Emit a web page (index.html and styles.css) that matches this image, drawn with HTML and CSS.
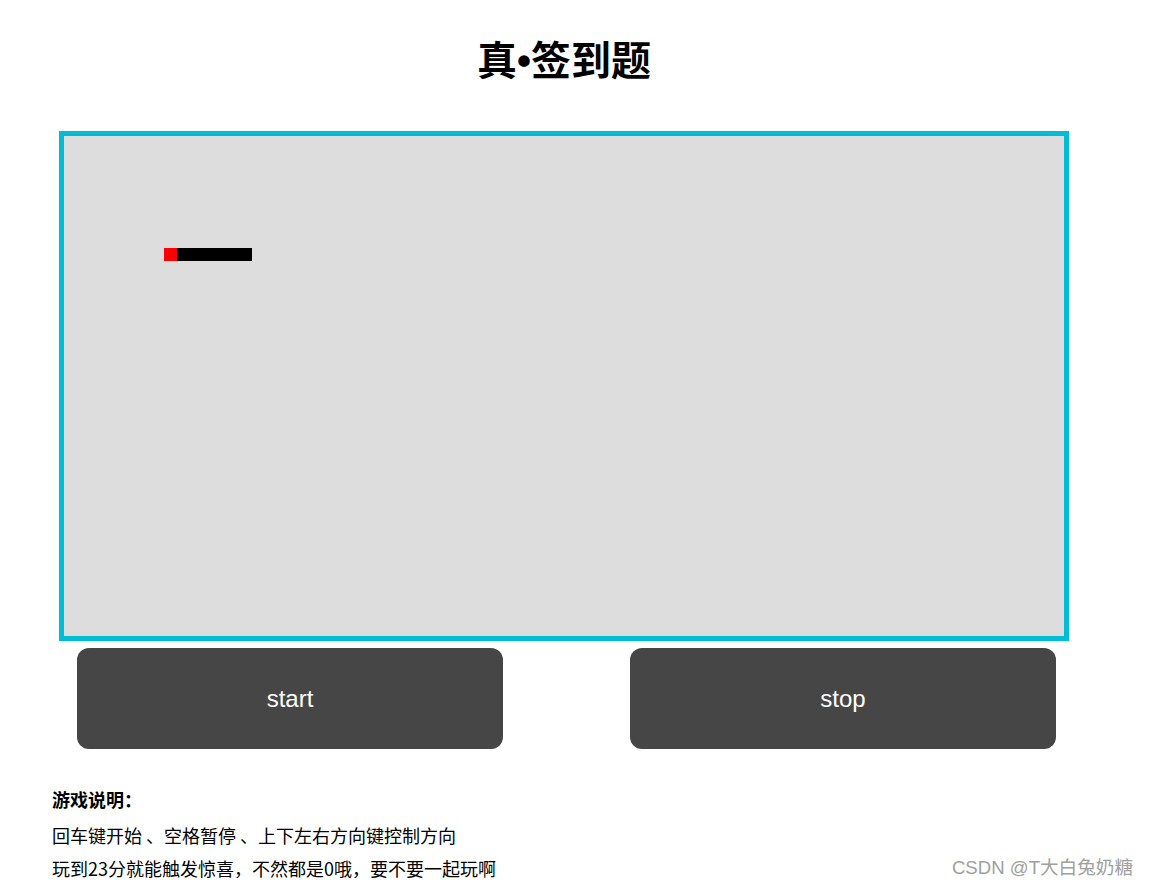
FILE: index.html
```html
<!DOCTYPE html>
<html lang="zh-CN">
<head>
<meta charset="utf-8">
<title>真•签到题</title>
<link rel="stylesheet" href="styles.css">
</head>
<body>
<div class="wrap">
  <h1 class="title">真•签到题</h1>
  <div class="board">
    <div class="snake">
      <div class="head"></div>
      <div class="body-seg"></div>
    </div>
  </div>
  <div class="controls">
    <button class="btn">start</button>
    <button class="btn">stop</button>
  </div>
</div>
<div class="help">
  <h3 class="help-title">游戏说明：</h3>
  <p class="help-line">回车键开始 、空格暂停 、上下左右方向键控制方向</p>
  <p class="help-line">玩到23分就能触发惊喜，不然都是0哦，要不要一起玩啊</p>
</div>
<div class="watermark">CSDN @T大白兔奶糖</div>
</body>
</html>
```
FILE: styles.css
```css
html, body {
  margin: 0;
  padding: 0;
  background: #ffffff;
}
body {
  position: relative;
  width: 1149px;
  height: 888px;
  overflow: hidden;
  font-family: "Noto Sans CJK SC", "Liberation Sans", sans-serif;
  color: #000;
}
.wrap {
  margin-left: 59px;
  width: 1010px;
}
.title {
  margin: 36px 0 45px;
  font-family: "Liberation Sans", "Noto Sans CJK SC", sans-serif;
  font-size: 40px;
  line-height: 50px;
  font-weight: 700;
  text-align: center;
}
.board {
  position: relative;
  width: 1000px;
  height: 500px;
  border: 5px solid #00bcd4;
  background: #dddddd;
}
.snake {
  position: absolute;
  left: 100px;
  top: 112px;
  display: flex;
  height: 12.5px;
}
.head {
  width: 12.5px;
  height: 12.5px;
  background: #ff0000;
}
.body-seg {
  width: 75px;
  height: 12.5px;
  background: #000000;
}
.controls {
  display: flex;
  justify-content: space-between;
  padding: 0 13px 0 18px;
  margin-top: 7px;
}
.btn {
  width: 426px;
  height: 101px;
  border: none;
  border-radius: 12px;
  background: #464646;
  color: #ffffff;
  font-family: "Liberation Sans", Arial, sans-serif;
  font-size: 24px;
  padding: 0;
}
.help {
  margin: 34px 0 0 52px;
}
.help-title {
  margin: 0 0 3px;
  font-size: 18px;
  line-height: 33px;
  font-weight: 700;
}
.help-line {
  margin: 0;
  font-size: 18px;
  line-height: 33px;
}
.watermark {
  position: absolute;
  right: 16px;
  top: 856px;
  font-family: "Liberation Sans", "Noto Sans CJK SC", sans-serif;
  font-size: 18.6px;
  line-height: 24px;
  color: #a0a0a0;
}
```
